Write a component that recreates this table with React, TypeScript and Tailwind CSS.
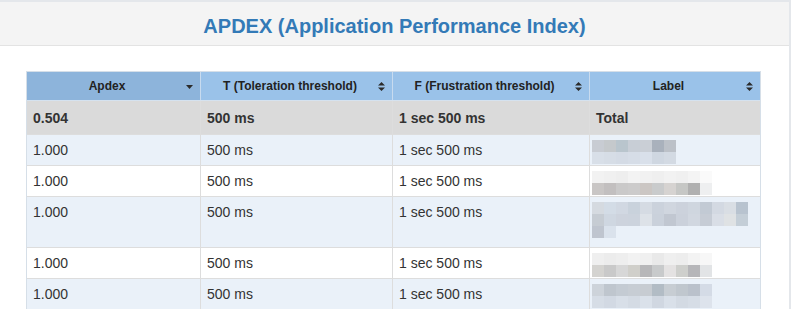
import { ReactNode } from "react";

type Row = {
  apdex: string;
  t: string;
  f: string;
  label: string[][];
};

const rows: Row[] = [
  {
    apdex: "1.000",
    t: "500 ms",
    f: "1 sec 500 ms",
    label: [
      ["#c8ccd3", "#c5c9cc", "#b9c5cd", "#c8ced6", "#cacfd6", "#a9b1bc", "#bcc1c8"],
      ["#d8dfe8", "#d6dde6", "#d4dbe5", "#d6dde7", "#d9e0ea", "#cfd7e1", "#d3dae3"],
    ],
  },
  {
    apdex: "1.000",
    t: "500 ms",
    f: "1 sec 500 ms",
    label: [
      ["#f2f2f2", "#f0f0f0", "#eeeeee", "#f3f3f3", "#f1f1f1", "#efefef", "#f2f2f2", "#f0f0f0", "#f4f4f4", "#fafafa"],
      ["#c9c6c5", "#c2bfbf", "#cac9c9", "#cccbcb", "#cbc6c3", "#c9cbcc", "#d6d3d1", "#c6c7c5", "#b0b0b0", "#eeeff0"],
    ],
  },
  {
    apdex: "1.000",
    t: "500 ms",
    f: "1 sec 500 ms",
    label: [
      ["#d5dae0", "#d3dce6", "#d1d8e2", "#c9d2dc", "#d5dbe3", "#cbd2dc", "#d0d6df", "#ccd2dc", "#cfd6df", "#c2cad4", "#d3d9e2", "#d9dee4", "#b8c3cf"],
      ["#c6ccd3", "#cfd7e1", "#cdd3dd", "#ccd3dd", "#dde2e8", "#cad1db", "#c1c7d1", "#cbd1db", "#d1d7e0", "#c6ccd5", "#d9dee6", "#dfe2e4", "#c4ced7"],
      ["#bfc5cf", "#dae2ec"],
    ],
  },
  {
    apdex: "1.000",
    t: "500 ms",
    f: "1 sec 500 ms",
    label: [
      ["#efefef", "#ececec", "#eeeeee", "#f2f2f2", "#f0f0f0", "#e9e9e9", "#efefef", "#ededed", "#f3f3f3", "#f7f7f7"],
      ["#d4d3d0", "#c9c9c9", "#d7d7d7", "#d0cfca", "#b7b7b9", "#c8cacb", "#e4e2e2", "#cecfcc", "#b6b6b9", "#e2e4e6"],
    ],
  },
  {
    apdex: "1.000",
    t: "500 ms",
    f: "1 sec 500 ms",
    label: [
      ["#cdd3da", "#bfc6ce", "#c4cbd3", "#c7cdd4", "#c7ccd2", "#b2bcc5", "#c7cdd3", "#c0c7ce", "#bac1cb", "#d4dbe6"],
      ["#d6dde6", "#d2d9e3", "#d8dfe8", "#d4dbe4", "#dae1ea", "#d0d7e1", "#d9e0e9", "#d3dae3", "#d6dde6", "#dde3ec"],
    ],
  },
];

function SortDown() {
  return (
    <svg width="7" height="9" viewBox="0 0 7 9" className="shrink-0">
      <path d="M0 3h7L3.5 7z" fill="#2b2b2b" />
    </svg>
  );
}

function SortBoth() {
  return (
    <svg width="7" height="9" viewBox="0 0 7 9" className="shrink-0">
      <path d="M3.5 0L7 3.5H0z M0 5.5h7L3.5 9z" fill="#2b2b2b" />
    </svg>
  );
}

function Mosaic({ blocks }: { blocks: string[][] }) {
  return (
    <div className="-ml-[4px] blur-[0.7px]">
      {blocks.map((line, i) => (
        <div key={i} className="flex">
          {line.map((c, j) => (
            <div key={j} className="h-[12px] w-[12px]" style={{ backgroundColor: c }} />
          ))}
        </div>
      ))}
    </div>
  );
}

function Th({ children, sorted, last }: { children: ReactNode; sorted?: boolean; last?: boolean }) {
  return (
    <div
      className={`flex items-center gap-[5px] pl-[6px] pr-[7px] font-bold text-[12px] text-[#222] ${
        sorted ? "bg-[#8db4db]" : "bg-[#9ac2e9]"
      } ${last ? "" : "border-r border-[#c8dbef]"}`}
    >
      <span className="flex-1 text-center">{children}</span>
      {sorted ? <SortDown /> : <SortBoth />}
    </div>
  );
}

const grid = "grid grid-cols-[174px_192px_197px_170px]";
const cell = "border-r border-[#dddddd] px-[6px] pt-[5px] pb-[5px]";

export default function App() {
  return (
    <div className="min-h-[309px] bg-white border-t-2 border-r-2 border-[#e4e7eb] font-['Liberation_Sans',Arial,sans-serif] text-[14px] leading-[20px] text-[#333]">
      <div className="h-[44px] pt-[4px] bg-[#f4f4f4] border-b border-[#e3e3e3] flex items-center justify-center">
        <h1 className="text-[20px] font-bold text-[#337ab7] leading-none">
          APDEX (Application Performance Index)
        </h1>
      </div>

      <div className="ml-[26px] mt-[25px] w-[735px] border border-[#d6dfe8]">
        <div className={`${grid} h-[29px] border-b border-[#d5e2ef]`}>
          <Th sorted>Apdex</Th>
          <Th>T (Toleration threshold)</Th>
          <Th>F (Frustration threshold)</Th>
          <Th last>Label</Th>
        </div>

        <div className={`${grid} h-[34px] bg-[#dadada] border-b border-[#dddddd] font-bold`}>
          <div className="border-r border-[#dddddd] px-[6px] pt-[7px]">0.504</div>
          <div className="border-r border-[#dddddd] px-[6px] pt-[7px]">500 ms</div>
          <div className="border-r border-[#dddddd] px-[6px] pt-[7px]">1 sec 500 ms</div>
          <div className="px-[6px] pt-[7px]">Total</div>
        </div>

        {rows.map((r, i) => (
          <div
            key={i}
            className={`${grid} border-b border-[#dddddd] ${i % 2 === 0 ? "bg-[#eaf1f9]" : "bg-white"} ${
              r.label.length > 2 ? "min-h-[51px]" : "h-[31px]"
            }`}
          >
            <div className={cell}>{r.apdex}</div>
            <div className={cell}>{r.t}</div>
            <div className={cell}>{r.f}</div>
            <div className="px-[6px] pt-[5px]">
              <Mosaic blocks={r.label} />
            </div>
          </div>
        ))}
      </div>
    </div>
  );
}
